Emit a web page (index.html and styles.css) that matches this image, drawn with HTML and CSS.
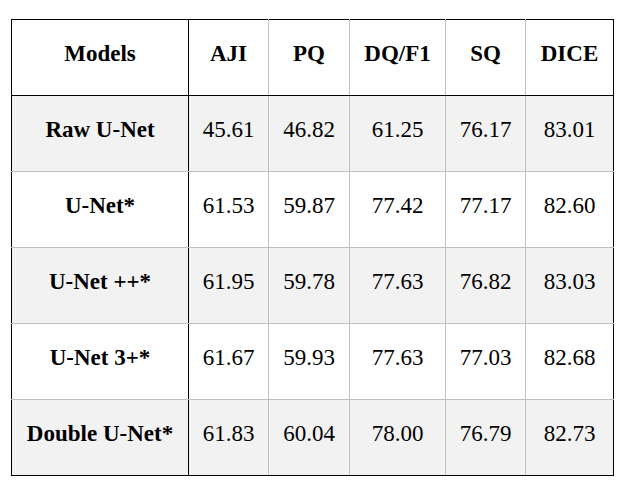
FILE: index.html
```html
<!DOCTYPE html>
<html lang="en">
<head>
    <meta charset="UTF-8">
    <title>Model Comparison</title>
    <link rel="stylesheet" href="styles.css">
</head>
<body>
    <table class="results">
        <colgroup>
            <col class="col-model">
            <col class="col-aji">
            <col class="col-pq">
            <col class="col-dq">
            <col class="col-sq">
            <col class="col-dice">
        </colgroup>
        <thead>
            <tr>
                <th>Models</th>
                <th>AJI</th>
                <th>PQ</th>
                <th>DQ/F1</th>
                <th>SQ</th>
                <th>DICE</th>
            </tr>
        </thead>
        <tbody>
            <tr>
                <th>Raw U-Net</th>
                <td>45.61</td><td>46.82</td><td>61.25</td><td>76.17</td><td>83.01</td>
            </tr>
            <tr>
                <th>U-Net*</th>
                <td>61.53</td><td>59.87</td><td>77.42</td><td>77.17</td><td>82.60</td>
            </tr>
            <tr>
                <th>U-Net ++*</th>
                <td>61.95</td><td>59.78</td><td>77.63</td><td>76.82</td><td>83.03</td>
            </tr>
            <tr>
                <th>U-Net 3+*</th>
                <td>61.67</td><td>59.93</td><td>77.63</td><td>77.03</td><td>82.68</td>
            </tr>
            <tr>
                <th>Double U-Net*</th>
                <td>61.83</td><td>60.04</td><td>78.00</td><td>76.79</td><td>82.73</td>
            </tr>
        </tbody>
    </table>
</body>
</html>
```

FILE: styles.css
```css
body {
    margin: 0;
    background-color: #ffffff;
    font-family: "Liberation Serif", "Times New Roman", serif;
}

.results {
    margin: 19px 0 0 11px;
    width: 602px;
    border-collapse: collapse;
    table-layout: fixed;
    font-size: 23px;
    color: #000000;
}

.col-model { width: 177px; }
.col-aji { width: 80px; }
.col-pq { width: 81px; }
.col-dq { width: 96px; }
.col-sq { width: 80px; }
.col-dice { width: 88px; }

.results th,
.results td {
    height: 76px;
    padding: 0 0 8px 0;
    box-sizing: border-box;
    text-align: center;
    vertical-align: middle;
    border: 1px solid #c0c0c0;
}

.results th {
    font-weight: bold;
}

.results td {
    font-weight: normal;
}

/* outer frame, first column and header are set off with dark rules */
.results tr > :first-child {
    border-left-color: #000000;
    border-right-color: #000000;
}

.results tr > :last-child {
    border-right-color: #000000;
}

.results thead th {
    border-top-color: #000000;
    border-bottom-color: #000000;
}

.results tbody tr:last-child > * {
    border-bottom-color: #000000;
}

.results tbody tr:nth-child(odd) {
    background-color: #f2f2f2;
}
```
